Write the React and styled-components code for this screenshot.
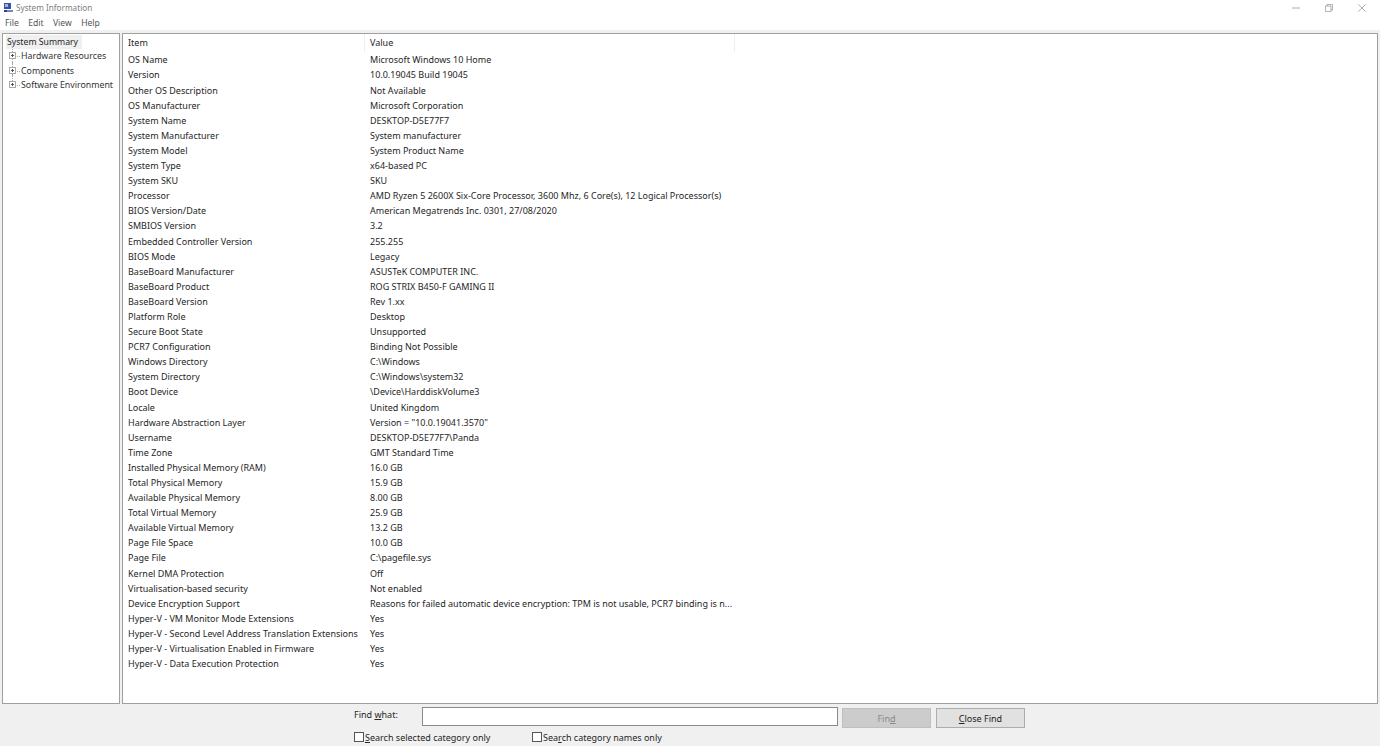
import React from 'react'
import styled, { createGlobalStyle } from 'styled-components'

const GlobalStyle = createGlobalStyle`
  html, body, #root {
    margin: 0;
    height: 100%;
  }
  body {
    font-family: "Noto Sans", "Open Sans", sans-serif;
    font-size: 9px;
    color: #262626;
    overflow: hidden;
    background: #f0f0f0;
  }
`;

const Window = styled.div`
  width: 1380px;
  height: 746px;
  display: flex;
  flex-direction: column;
  background: #f0f0f0;
`;

const TitleBar = styled.header`
  flex: none;
  height: 15px;
  background: #fff;
  display: flex;
  align-items: center;
  padding-left: 3px;
  color: #808080;
  font-size: 8.2px;
`;

const AppTitle = styled.span`
  margin-left: 3px;
  flex: 1;
`;

const WindowControls = styled.div`
  display: flex;
  gap: 25px;
  padding-right: 14px;
  height: 14px;
  align-items: center;

  svg {
    display: block;
    width: 8px;
    height: 8px;
    stroke: #999;
    fill: none;
  }
`;

const MenuBar = styled.nav`
  flex: none;
  height: 15px;
  background: #fff;
  display: flex;
  align-items: center;
  gap: 9.4px;
  padding-left: 5px;
  color: #555;
  font-size: 8.6px;
`;

const Panels = styled.div`
  flex: none;
  height: 671px;
  margin-top: 3px;
  padding: 0 2px;
  display: grid;
  grid-template-columns: 118px 1fr;
  gap: 2px;
`;

const Panel = styled.section`
  background: #fff;
  border: 1px solid #a0a0a0;
  box-sizing: border-box;
  min-width: 0;
`;

const TreeRoot = styled.div`
  margin: 1px 0 0 3px;
  padding: 0 1px;
  width: 74px;
  height: 14px;
  line-height: 14px;
  background: #f0f0f0;
  font-size: 8.7px;
  white-space: nowrap;
`;

const TreeNode = styled.div`
  position: relative;
  height: 14.5px;
  line-height: 14.5px;
  padding-left: 18px;
  font-size: 8.8px;
  white-space: nowrap;
  color: #333;

  &::before {
    content: '';
    position: absolute;
    left: 9px;
    top: 7px;
    width: 8px;
    border-top: 1px dotted #aaa;
  }

  &::after {
    content: '';
    position: absolute;
    left: 9px;
    top: -3px;
    height: ${({ $last }) => ($last ? '10px' : '18px')};
    border-left: 1px dotted #aaa;
  }
`;

const Expander = styled.svg`
  position: absolute;
  left: 6px;
  top: 3px;
  width: 7px;
  height: 7px;
  z-index: 1;
`;

const Header = styled.div`
  display: grid;
  grid-template-columns: 242px 370px;
  height: 18.4px;
  line-height: 18px;
`;

const HeaderCell = styled.div`
  padding-left: 5px;
  border-right: 1px solid #eee;
  box-sizing: border-box;
`;

const Rows = styled.div`
  display: flex;
  flex-direction: column;
`;

const Row = styled.div`
  display: grid;
  grid-template-columns: 242px 1fr;
  height: 15.1px;
  line-height: 15px;
  white-space: nowrap;
`;

const Cell = styled.div`
  padding-left: 5px;
`;

const FindBar = styled.footer`
  flex: 1;
  display: flex;
  flex-direction: column;
  padding: 3px 0 0 354px;
`;

const FindRow = styled.div`
  display: flex;
  align-items: flex-start;
  height: 21px;
`;

const FindLabel = styled.label`
  width: 68px;
  line-height: 16px;
`;

const FindInput = styled.input`
  width: 416px;
  height: 19px;
  box-sizing: border-box;
  border: 1px solid #8a8a8a;
  background: #fff;
  margin-right: 4px;
  padding: 0;
`;

const Button = styled.button`
  width: 89px;
  height: 20px;
  box-sizing: border-box;
  margin: 1px 5px 0 0;
  padding: 0;
  font: inherit;
  color: ${({ disabled }) => (disabled ? '#888' : '#222')};
  background: ${({ disabled }) => (disabled ? '#cccccc' : '#e1e1e1')};
  border: 1px solid ${({ disabled }) => (disabled ? '#bfbfbf' : '#adadad')};
`;

const OptionRow = styled.div`
  display: flex;
  height: 18px;
  align-items: center;
`;

const Option = styled.label`
  width: 178px;
  display: flex;
  align-items: center;
  gap: 1px;
`;

const CheckBox = styled.span`
  width: 10px;
  height: 10px;
  box-sizing: border-box;
  border: 1px solid #555;
  background: #fff;
`;

const rows = [
  ['OS Name', 'Microsoft Windows 10 Home'],
  ['Version', '10.0.19045 Build 19045'],
  ['Other OS Description', 'Not Available'],
  ['OS Manufacturer', 'Microsoft Corporation'],
  ['System Name', 'DESKTOP-D5E77F7'],
  ['System Manufacturer', 'System manufacturer'],
  ['System Model', 'System Product Name'],
  ['System Type', 'x64-based PC'],
  ['System SKU', 'SKU'],
  ['Processor', 'AMD Ryzen 5 2600X Six-Core Processor, 3600 Mhz, 6 Core(s), 12 Logical Processor(s)'],
  ['BIOS Version/Date', 'American Megatrends Inc. 0301, 27/08/2020'],
  ['SMBIOS Version', '3.2'],
  ['Embedded Controller Version', '255.255'],
  ['BIOS Mode', 'Legacy'],
  ['BaseBoard Manufacturer', 'ASUSTeK COMPUTER INC.'],
  ['BaseBoard Product', 'ROG STRIX B450-F GAMING II'],
  ['BaseBoard Version', 'Rev 1.xx'],
  ['Platform Role', 'Desktop'],
  ['Secure Boot State', 'Unsupported'],
  ['PCR7 Configuration', 'Binding Not Possible'],
  ['Windows Directory', 'C:\\Windows'],
  ['System Directory', 'C:\\Windows\\system32'],
  ['Boot Device', '\\Device\\HarddiskVolume3'],
  ['Locale', 'United Kingdom'],
  ['Hardware Abstraction Layer', 'Version = "10.0.19041.3570"'],
  ['Username', 'DESKTOP-D5E77F7\\Panda'],
  ['Time Zone', 'GMT Standard Time'],
  ['Installed Physical Memory (RAM)', '16.0 GB'],
  ['Total Physical Memory', '15.9 GB'],
  ['Available Physical Memory', '8.00 GB'],
  ['Total Virtual Memory', '25.9 GB'],
  ['Available Virtual Memory', '13.2 GB'],
  ['Page File Space', '10.0 GB'],
  ['Page File', 'C:\\pagefile.sys'],
  ['Kernel DMA Protection', 'Off'],
  ['Virtualisation-based security', 'Not enabled'],
  ['Device Encryption Support', 'Reasons for failed automatic device encryption: TPM is not usable, PCR7 binding is n...'],
  ['Hyper-V - VM Monitor Mode Extensions', 'Yes'],
  ['Hyper-V - Second Level Address Translation Extensions', 'Yes'],
  ['Hyper-V - Virtualisation Enabled in Firmware', 'Yes'],
  ['Hyper-V - Data Execution Protection', 'Yes'],
];

const treeNodes = ['Hardware Resources', 'Components', 'Software Environment'];

const AppIcon = () => (
  <svg width="10" height="10" viewBox="0 0 10 10">
    <rect x="1" y="0" width="7" height="6" fill="#3b4fa8" />
    <rect x="2" y="1" width="3" height="3" fill="#9db4e8" />
    <path d="M4 7h6v2H4z" fill="#7a86b8" />
    <path d="M1 7h3v2H1z" fill="#2f3f8f" />
  </svg>
);

const PlusBox = () => (
  <Expander viewBox="0 0 7 7">
    <rect x="0.5" y="0.5" width="6" height="6" fill="#fff" stroke="#aaa" />
    <path d="M2 3.5h3M3.5 2v3" stroke="#555" />
  </Expander>
);

export default () => {
  return (
    <Window>
      <GlobalStyle />
      <TitleBar>
        <AppIcon />
        <AppTitle>System Information</AppTitle>
        <WindowControls>
          <svg viewBox="0 0 10 10"><path d="M0 5h10" /></svg>
          <svg viewBox="0 0 10 10"><path d="M0.5 2.5h7v7h-7zM2.5 2.5v-2h7v7h-2" /></svg>
          <svg viewBox="0 0 10 10"><path d="M0.5 0.5l9 9M9.5 0.5l-9 9" /></svg>
        </WindowControls>
      </TitleBar>
      <MenuBar>
        <span>File</span>
        <span>Edit</span>
        <span>View</span>
        <span>Help</span>
      </MenuBar>
      <Panels>
        <Panel>
          <TreeRoot>System Summary</TreeRoot>
          {treeNodes.map((name, i) => (
            <TreeNode key={name} $last={i === treeNodes.length - 1}>
              <PlusBox />
              {name}
            </TreeNode>
          ))}
        </Panel>
        <Panel>
          <Header>
            <HeaderCell>Item</HeaderCell>
            <HeaderCell>Value</HeaderCell>
          </Header>
          <Rows>
            {rows.map(([item, value]) => (
              <Row key={item}>
                <Cell>{item}</Cell>
                <Cell>{value}</Cell>
              </Row>
            ))}
          </Rows>
        </Panel>
      </Panels>
      <FindBar>
        <FindRow>
          <FindLabel>Find <u>w</u>hat:</FindLabel>
          <FindInput />
          <Button disabled>Fin<u>d</u></Button>
          <Button><u>C</u>lose Find</Button>
        </FindRow>
        <OptionRow>
          <Option><CheckBox /><span><u>S</u>earch selected category only</span></Option>
          <Option><CheckBox /><span>Sea<u>r</u>ch category names only</span></Option>
        </OptionRow>
      </FindBar>
    </Window>
  )
}
